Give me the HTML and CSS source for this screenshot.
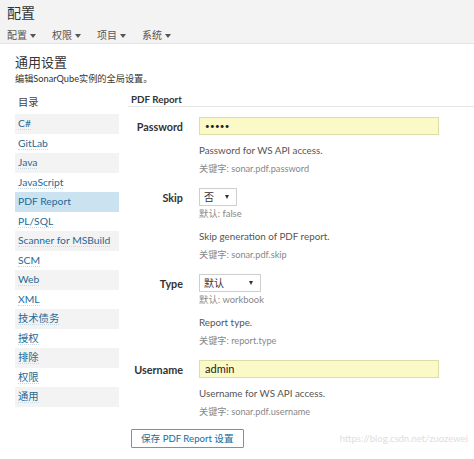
FILE: index.html
```html
<!DOCTYPE html>
<html lang="zh-CN">
    <head>
        <meta charset="utf-8">
        <title>配置 - 通用设置</title>
        <link rel="stylesheet" href="styles.css">
    </head>
    <body>
        <div class="top-bar">
            <h1 class="top-title">配置</h1>
            <ul class="top-nav">
                <li>配置<i class="caret"></i></li>
                <li>权限<i class="caret"></i></li>
                <li>项目<i class="caret"></i></li>
                <li>系统<i class="caret"></i></li>
            </ul>
        </div>
        <div class="page">
            <div class="page-head">
                <h2 class="page-title">通用设置</h2>
                <p class="page-desc">编辑SonarQube实例的全局设置。</p>
            </div>
            <div class="layout">
                <ul class="side-menu">
                    <li class="side-head">目录</li>
                    <li class="odd"><a href="#">C#</a></li>
                    <li><a href="#">GitLab</a></li>
                    <li class="odd"><a href="#">Java</a></li>
                    <li><a href="#">JavaScript</a></li>
                    <li class="active"><a href="#">PDF Report</a></li>
                    <li><a href="#">PL/SQL</a></li>
                    <li class="odd"><a href="#">Scanner for MSBuild</a></li>
                    <li><a href="#">SCM</a></li>
                    <li class="odd"><a href="#">Web</a></li>
                    <li><a href="#">XML</a></li>
                    <li class="odd"><a href="#">技术债务</a></li>
                    <li><a href="#">授权</a></li>
                    <li class="odd"><a href="#">排除</a></li>
                    <li><a href="#">权限</a></li>
                    <li class="odd"><a href="#">通用</a></li>
                </ul>
                <div class="main">
                    <h3 class="section-title">PDF Report</h3>

                    <div class="field">
                        <label class="field-label">Password</label>
                        <div class="field-body">
                            <div class="text-input pwd">&bull;&bull;&bull;&bull;&bull;</div>
                            <p class="field-desc">Password for WS API access.</p>
                            <p class="field-key">关键字: sonar.pdf.password</p>
                        </div>
                    </div>

                    <div class="field">
                        <label class="field-label">Skip</label>
                        <div class="field-body">
                            <div class="select select-sm">否<i class="arrow"></i></div>
                            <p class="field-default">默认: false</p>
                            <p class="field-desc">Skip generation of PDF report.</p>
                            <p class="field-key">关键字: sonar.pdf.skip</p>
                        </div>
                    </div>

                    <div class="field">
                        <label class="field-label">Type</label>
                        <div class="field-body">
                            <div class="select select-md">默认<i class="arrow"></i></div>
                            <p class="field-default">默认: workbook</p>
                            <p class="field-desc">Report type.</p>
                            <p class="field-key">关键字: report.type</p>
                        </div>
                    </div>

                    <div class="field">
                        <label class="field-label">Username</label>
                        <div class="field-body">
                            <div class="text-input">admin</div>
                            <p class="field-desc">Username for WS API access.</p>
                            <p class="field-key">关键字: sonar.pdf.username</p>
                        </div>
                    </div>

                    <div class="actions">
                        <button class="save-btn">保存 PDF Report 设置</button>
                        <span class="watermark">https://blog.csdn.net/zuozewei</span>
                    </div>
                </div>
            </div>
        </div>
    </body>
</html>
```

FILE: styles.css
```css
html, body {
    margin: 0;
    padding: 0;
}
body {
    background: #fff;
    color: #444;
    font-family: Lato, "Noto Sans CJK SC", sans-serif;
    font-size: 10px;
}
ul, p, h1, h2, h3 {
    margin: 0;
    padding: 0;
}
ul {
    list-style: none;
}
a {
    color: #236a97;
    text-decoration: none;
}

/* 顶部导航 */
.top-bar {
    height: 44px;
    box-sizing: border-box;
    padding: 3px 7px 0;
    background: #f3f3f3;
    border-bottom: 1px solid #e4e4e4;
}
.top-title {
    font-size: 14px;
    font-weight: normal;
    line-height: 20px;
    color: #333;
}
.top-nav {
    display: flex;
    margin-top: 3px;
}
.top-nav li {
    flex: 0 0 45px;
    line-height: 18px;
    font-size: 10px;
    color: #555;
}
.caret {
    display: inline-block;
    margin-left: 3px;
    vertical-align: middle;
    border-top: 4px solid #555;
    border-left: 3.5px solid transparent;
    border-right: 3.5px solid transparent;
}

/* 页面 */
.page {
    padding-left: 15px;
}
.page-head {
    padding-top: 9px;
}
.page-title {
    font-size: 13px;
    font-weight: normal;
    line-height: 18px;
    color: #333;
}
.page-desc {
    margin-top: 1px;
    font-size: 9.2px;
    line-height: 14px;
    color: #333;
}
.layout {
    display: flex;
    margin-top: 5px;
}

/* 左侧目录 */
.side-menu {
    flex: 0 0 104px;
    min-width: 0;
}
.side-menu li {
    height: 19.5px;
    line-height: 19.5px;
    padding-left: 3px;
    font-size: 10.3px;
    white-space: nowrap;
    overflow: hidden;
}
.side-menu .side-head {
    height: 23px;
    line-height: 22px;
    color: #444;
}
.side-menu .odd {
    background: #f3f3f3;
}
.side-menu .active {
    background: #cbe2f1;
}
.side-menu a {
    border-bottom: 1px dotted #c5d9e6;
}

/* 右侧表单 */
.main {
    flex: 1;
    min-width: 0;
    margin-left: 9px;
    margin-top: 1px;
}
.section-title {
    font-size: 9.8px;
    font-weight: bold;
    color: #333;
    line-height: 14px;
    padding: 0 0 0 3px;
    border-bottom: 1px solid #e6e6e6;
    height: 14px;
}
.field {
    display: flex;
    margin-top: 10px;
    margin-bottom: 2px;
}
.field + .field {
    margin-top: 0;
}
.field-body {
    display: flex;
    flex-direction: column;
    align-items: flex-start;
    padding-bottom: 8px;
}
.field-label {
    flex: 0 0 55px;
    display: flex;
    justify-content: flex-end;
    margin-right: 16px;
    white-space: nowrap;
    font-size: 10.8px;
    font-weight: bold;
    color: #333;
    line-height: 20px;
}
.text-input {
    width: 240px;
    height: 18px;
    box-sizing: border-box;
    padding-left: 5px;
    background: #fbfac6;
    border: 1px solid #dedcaa;
    font-size: 11px;
    line-height: 16px;
    color: #222;
}
.text-input.pwd {
    font-size: 8px;
    letter-spacing: 0.3px;
}
.select {
    position: relative;
    height: 18px;
    box-sizing: border-box;
    padding-left: 4px;
    background: #fff;
    border: 1px solid #cfcfcf;
    font-size: 10px;
    line-height: 16px;
    color: #333;
}
.select-sm {
    width: 38px;
}
.select-md {
    width: 62px;
}
.arrow {
    position: absolute;
    right: 7px;
    top: 6px;
    border-top: 4px solid #333;
    border-left: 2.5px solid transparent;
    border-right: 2.5px solid transparent;
}
.field-default {
    margin-top: 1px;
    font-size: 9.4px;
    line-height: 14px;
    color: #888;
}
.field-desc {
    margin-top: 6px;
    font-size: 9.8px;
    line-height: 18px;
    color: #555;
}
.field-key {
    margin-top: 1px;
    font-size: 9.2px;
    line-height: 18px;
    color: #888;
}
.actions {
    display: flex;
    align-items: center;
    justify-content: space-between;
    padding: 0 6px 0 3px;
    margin-top: -2px;
}
.save-btn {
    height: 19px;
    padding: 0 9px;
    background: #fff;
    border: 1px solid #6f96b0;
    border-radius: 1px;
    font-family: Lato, "Noto Sans CJK SC", sans-serif;
    font-size: 9.6px;
    line-height: 17px;
    color: #236a97;
}
.watermark {
    font-size: 9.5px;
    color: #dedede;
}
```
